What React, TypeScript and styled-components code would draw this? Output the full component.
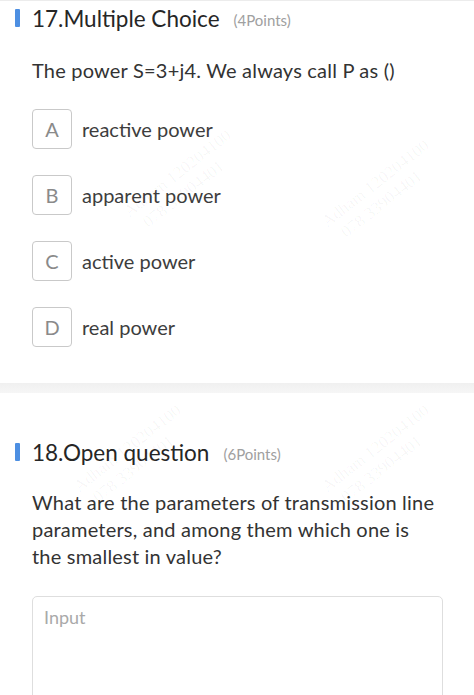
import React from 'react';
import styled, { createGlobalStyle } from 'styled-components';

const GlobalStyle = createGlobalStyle`
  html, body {
    margin: 0;
    padding: 0;
    background: #ffffff;
  }
  body {
    font-family: Lato, 'Open Sans', sans-serif;
    color: #2b2b2b;
    -webkit-font-smoothing: antialiased;
  }
`;

const Page = styled.div`
  position: relative;
  width: 474px;
  height: 695px;
  overflow: hidden;
  border-top: 1px solid #ececec;
  box-sizing: border-box;
`;

const Section = styled.section<{ $top: number }>`
  padding: 0 31px 0 32px;
  margin-top: ${(p) => p.$top}px;
`;

const Header = styled.div`
  position: relative;
  display: flex;
  align-items: center;
  height: 34px;
`;

const Bar = styled.span`
  position: absolute;
  left: -17px;
  top: 8px;
  width: 5px;
  height: 18px;
  background: #4d8fe2;
  border-radius: 1px;
`;

const Title = styled.h2`
  margin: 0;
  font-size: 22.5px;
  font-weight: 400;
  color: #262626;
`;

const Points = styled.span`
  margin-left: 14px;
  margin-top: 3px;
  font-size: 15px;
  color: #a0a0a0;
`;

const Stem = styled.p<{ $gap: number }>`
  margin: ${(p) => p.$gap}px 0 0;
  font-size: 20px;
  line-height: 27px;
  letter-spacing: 0.2px;
  color: #333;
`;

const Options = styled.div`
  display: flex;
  flex-direction: column;
  gap: 26px;
  margin-top: 25px;
`;

const Option = styled.div`
  display: flex;
  align-items: center;
  gap: 10px;
`;

const Letter = styled.span`
  display: flex;
  align-items: center;
  justify-content: center;
  width: 40px;
  height: 40px;
  box-sizing: border-box;
  border: 1px solid #c9c9c9;
  border-radius: 4px;
  font-size: 20px;
  color: #8a8a8a;
`;

const OptionText = styled.span`
  font-size: 20px;
  color: #3d3d3d;
`;

const Divider = styled.div`
  height: 10px;
  margin-top: 36px;
  background: linear-gradient(#f0f0f0, #f6f6f6);
`;

const InputBox = styled.div`
  margin-top: 26px;
  height: 120px;
  box-sizing: border-box;
  border: 1px solid #dedede;
  border-radius: 5px;
  padding: 9px 11px;
  font-size: 18px;
  color: #a9a9a9;
`;

const Watermark = styled.div<{ $x: number; $y: number }>`
  position: absolute;
  left: ${(p) => p.$x}px;
  top: ${(p) => p.$y}px;
  transform: rotate(-38deg);
  transform-origin: left top;
  font-family: 'Liberation Serif', serif;
  font-size: 17px;
  line-height: 20px;
  color: rgba(0, 0, 0, 0.04);
  white-space: nowrap;
  pointer-events: none;
`;

const options = [
  { key: 'A', text: 'reactive power' },
  { key: 'B', text: 'apparent power' },
  { key: 'C', text: 'active power' },
  { key: 'D', text: 'real power' },
];

const marks = [
  { x: 120, y: 205 },
  { x: 318, y: 215 },
  { x: 70, y: 480 },
  { x: 318, y: 480 },
];

export default function App() {
  return (
    <Page>
      <GlobalStyle />
      <Section $top={0}>
        <Header>
          <Bar />
          <Title>17.Multiple Choice</Title>
          <Points>(4Points)</Points>
        </Header>
        <Stem $gap={22}>The power S=3+j4. We always call P as ()</Stem>
        <Options>
          {options.map((o) => (
            <Option key={o.key}>
              <Letter>{o.key}</Letter>
              <OptionText>{o.text}</OptionText>
            </Option>
          ))}
        </Options>
      </Section>
      <Divider />
      <Section $top={42}>
        <Header>
          <Bar />
          <Title>18.Open question</Title>
          <Points>(6Points)</Points>
        </Header>
        <Stem $gap={20}>
          What are the parameters of transmission line parameters, and among them which one is
          the smallest in value?
        </Stem>
        <InputBox>Input</InputBox>
      </Section>
      {marks.map((m, i) => (
        <Watermark key={i} $x={m.x} $y={m.y}>
          Adham 120204100
          <br />
          &nbsp;&nbsp;078 33904401
        </Watermark>
      ))}
    </Page>
  );
}
